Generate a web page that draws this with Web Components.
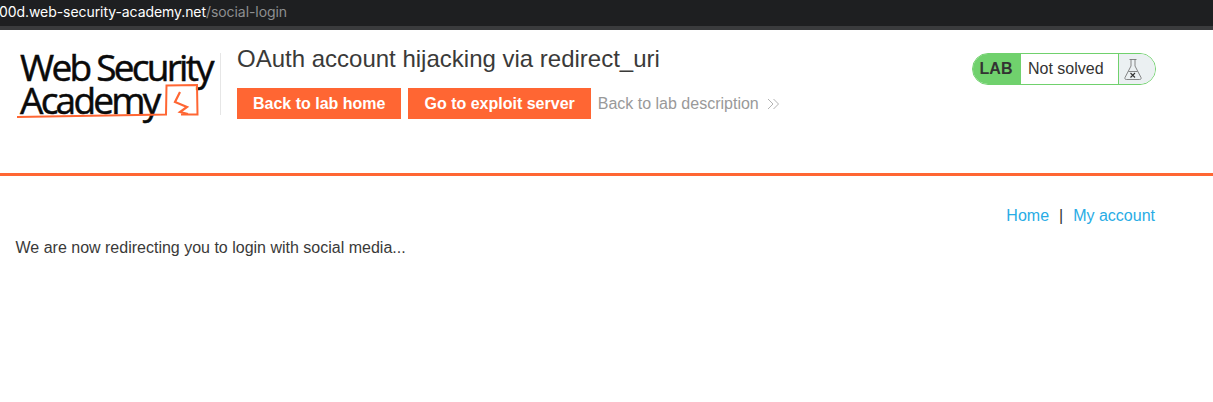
<!DOCTYPE html>
<html>
<head>
<meta charset="utf-8">
<title>OAuth account hijacking via redirect_uri</title>
<style>
	html, body { margin: 0; background: #fff; }
	body { font-family: "Liberation Sans", Arial, sans-serif; color: #333332; }
</style>
</head>
<body>
<url-bar host="00d.web-security-academy.net" path="/social-login"></url-bar>
<lab-header title="OAuth account hijacking via redirect_uri"></lab-header>
<page-nav></page-nav>
<page-message>We are now redirecting you to login with social media...</page-message>

<script>
class UrlBar extends HTMLElement {
	constructor(){
		super()
		this.shadow = this.attachShadow({mode: 'open'})
	}
	connectedCallback(){
		this.shadow.innerHTML = `
			<style>
				:host{
					display: block;
					height: 26px;
					background: #1e1f21;
					border-bottom: 4px solid #3a3b3d;
					font: 14px/23px "Inter", "Liberation Sans", sans-serif;
					letter-spacing: -0.07px;
					color: #fff;
					overflow: hidden;
					white-space: nowrap;
				}
				span{ color: #8e8f91; }
				div{ margin-left: -1px; }
			</style>
			<div>${this.getAttribute('host')}<span>${this.getAttribute('path')}</span></div>
		`
	}
}

class AcademyLogo extends HTMLElement {
	constructor(){
		super()
		this.shadow = this.attachShadow({mode: 'open'})
	}
	connectedCallback(){
		this.shadow.innerHTML = `
			<style>
				:host{
					display: block;
					position: relative;
					width: 204px;
					height: 72px;
					color: #0a0a0a;
					font-family: "Open Sans", "Liberation Sans", sans-serif;
				}
				.name{
					font-size: 37px;
					line-height: 33px;
					letter-spacing: -2.75px;
					white-space: pre-line;
					margin: -3px 0 0 3px;
					-webkit-text-stroke: 0.5px #0a0a0a;
				}
				svg{ position: absolute; left: 0; top: 0; }
			</style>
			<div class="name">Web Security
Academy</div>
			<svg width="204" height="72" viewBox="0 0 204 72" fill="none" stroke="#ff6633">
				<path d="M0 67C50 66 100 65 149 64.500L149.500 35.500L180 35L180.500 64.500H164" stroke-width="2"/>
				<path d="M163 42L158 52L170 57L163 62L171 64" stroke-width="2.200"/>
			</svg>
		`
	}
}

class LabStatus extends HTMLElement {
	constructor(){
		super()
		this.shadow = this.attachShadow({mode: 'open'})
	}
	connectedCallback(){
		this.shadow.innerHTML = `
			<style>
				:host{
					display: flex;
					box-sizing: border-box;
					width: 184px;
					height: 32px;
					border: 1px solid #70d16d;
					border-radius: 16px;
					overflow: hidden;
					font-size: 16px;
					line-height: 30px;
				}
				.lab{
					width: 48px;
					padding-right: 2px;
					box-sizing: border-box;
					background: #70d16d;
					font-weight: bold;
					text-align: center;
				}
				.state{
					flex: 1;
					padding-left: 7px;
					color: #333332;
				}
				.icon{
					width: 37px;
					background: #ebf0f2;
					border-left: 1px solid #70d16d;
					display: flex;
					align-items: center;
					padding-left: 5px;
					box-sizing: border-box;
				}
			</style>
			<div class="lab">LAB</div>
			<div class="state">Not solved</div>
			<div class="icon">
				<svg width="18" height="24" viewBox="0 0 18 24" fill="none" stroke="#6a6a6a" stroke-width="0.800">
					<path d="M5.500 2.500H12.500M7 2.500V9L1 20.500C0.500 21.500 1 22.500 2.500 22.500H15.500C17 22.500 17.500 21.500 17 20.500L11 9V2.500"/>
					<path d="M4.500 14.500H13.500"/>
					<path d="M6.500 16L11 20.500M11 16L6.500 20.500" stroke="#333" stroke-width="1.100"/>
				</svg>
			</div>
		`
	}
}

class LabHeader extends HTMLElement {
	constructor(){
		super()
		this.shadow = this.attachShadow({mode: 'open'})
	}
	connectedCallback(){
		this.shadow.innerHTML = `
			<style>
				:host{
					display: flex;
					box-sizing: border-box;
					height: 146px;
					padding: 15px 57px 0 17px;
					border-bottom: 3px solid #ff6633;
					align-items: flex-start;
				}
				.brand{
					box-sizing: border-box;
					width: 204px;
					height: 62px;
					margin-top: 8px;
					border-right: 1px solid #e6e6e6;
				}
				.main{ margin-left: 16px; flex: 1; }
				h2{
					margin: 0 0 15px;
					font-size: 24px;
					line-height: 28px;
					font-weight: normal;
					color: #3a3a39;
				}
				.links{
					display: flex;
					gap: 7px;
					align-items: center;
				}
				a{
					text-decoration: none;
					font-size: 16px;
				}
				.btn{
					background: #ff6633;
					color: #fff;
					font-weight: bold;
					line-height: 31px;
					padding: 0 16px;
				}
				.back{
					color: #999;
					display: flex;
					align-items: center;
					gap: 8px;
				}
				lab-status{ margin-top: 8px; }
			</style>
			<div class="brand"><academy-logo></academy-logo></div>
			<div class="main">
				<h2>${this.getAttribute('title')}</h2>
				<div class="links">
					<a class="btn" href="#">Back to lab home</a>
					<a class="btn" href="#">Go to exploit server</a>
					<a class="back" href="#">Back to lab description
						<svg width="13" height="12" viewBox="0 0 13 12" fill="none" stroke="#b3b3b3" stroke-width="1"><path d="M1 1L6 6L1 11M6.500 1L11.500 6L6.500 11"/></svg>
					</a>
				</div>
			</div>
			<lab-status></lab-status>
		`
	}
}

class PageNav extends HTMLElement {
	constructor(){
		super()
		this.shadow = this.attachShadow({mode: 'open'})
	}
	connectedCallback(){
		this.shadow.innerHTML = `
			<style>
				:host{
					display: flex;
					justify-content: flex-end;
					gap: 10px;
					padding: 30px 58px 0 0;
					font-size: 16px;
					line-height: 20px;
					color: #333332;
				}
				a{ color: #29ace5; text-decoration: none; }
			</style>
			<a href="#">Home</a><span>|</span><a href="#">My account</a>
		`
	}
}

class PageMessage extends HTMLElement {
	constructor(){
		super()
		this.shadow = this.attachShadow({mode: 'open'})
	}
	connectedCallback(){
		this.shadow.innerHTML = `
			<style>
				:host{
					display: block;
					padding: 12px 15.5px 0;
					font-size: 16px;
					line-height: 20px;
					color: #3a3a39;
				}
			</style>
			<slot></slot>
		`
	}
}

customElements.define('url-bar', UrlBar)
customElements.define('academy-logo', AcademyLogo)
customElements.define('lab-status', LabStatus)
customElements.define('lab-header', LabHeader)
customElements.define('page-nav', PageNav)
customElements.define('page-message', PageMessage)
</script>
</body>
</html>
